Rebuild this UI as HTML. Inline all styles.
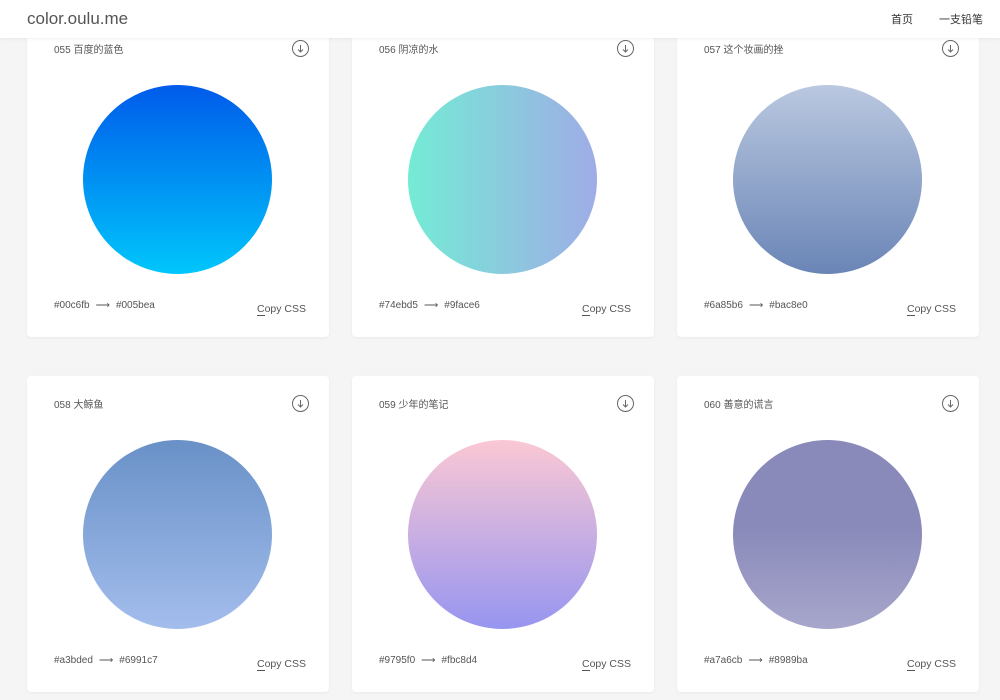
<!DOCTYPE html>
<html><head><meta charset="utf-8"><style>
*{margin:0;padding:0;box-sizing:border-box}
body{width:1000px;height:700px;overflow:hidden;background:#f5f5f5;font-family:"Liberation Sans","Noto Sans CJK SC",sans-serif;position:relative}
.hdr{position:absolute;left:0;top:0;width:1000px;height:38px;background:#fff;box-shadow:0 1px 3px rgba(0,0,0,.06);z-index:5}
.logo{position:absolute;left:27px;top:9px;font-size:17px;color:#555}
.nav{position:absolute;top:11px;font-size:11px;color:#333}
.card{position:absolute;width:302px;height:316px;background:#fff;border-radius:4px;box-shadow:0 1px 3px rgba(0,0,0,.05)}
.t{position:absolute;left:27px;top:20px;font-size:10px;color:#555}
.dl{position:absolute;left:265px;top:19px;width:17px;height:17px;border:1px solid #666;border-radius:50%}
.dl svg{position:absolute;left:3px;top:3px}
.c{position:absolute;left:56px;top:64px;width:189px;height:189px;border-radius:50%}
.h{position:absolute;left:27px;top:279px;font-size:10px;color:#555}
.h span{margin:0 6px}
.cp{position:absolute;right:23px;top:282px;font-size:10.5px;color:#555}
.cp u{text-decoration:none;border-bottom:1px solid #555}
</style></head><body>
<div class="hdr"><div class="logo">color.oulu.me</div><div class="nav" style="left:891px">首页</div><div class="nav" style="left:939px">一支铅笔</div></div>

<div class="card" style="left:27px;top:21px"><div class="t">055 百度的蓝色</div><div class="dl"><svg width="9" height="9" viewBox="0 0 9 9"><path d="M4.5 1v7M2 5.5l2.5 2.5 2.5-2.5" fill="none" stroke="#666"/></svg></div><div class="c" style="background:linear-gradient(#005bea,#00c6fb)"></div><div class="h">#00c6fb<span>⟶</span>#005bea</div><div class="cp"><u>C</u>opy CSS</div></div>
<div class="card" style="left:352px;top:21px"><div class="t">056 阴凉的水</div><div class="dl"><svg width="9" height="9" viewBox="0 0 9 9"><path d="M4.5 1v7M2 5.5l2.5 2.5 2.5-2.5" fill="none" stroke="#666"/></svg></div><div class="c" style="background:linear-gradient(90deg,#74ebd5,#9face6)"></div><div class="h">#74ebd5<span>⟶</span>#9face6</div><div class="cp"><u>C</u>opy CSS</div></div>
<div class="card" style="left:677px;top:21px"><div class="t">057 这个妆画的挫</div><div class="dl"><svg width="9" height="9" viewBox="0 0 9 9"><path d="M4.5 1v7M2 5.5l2.5 2.5 2.5-2.5" fill="none" stroke="#666"/></svg></div><div class="c" style="background:linear-gradient(#bac8e0,#6a85b6)"></div><div class="h">#6a85b6<span>⟶</span>#bac8e0</div><div class="cp"><u>C</u>opy CSS</div></div>

<div class="card" style="left:27px;top:376px"><div class="t">058 大鲸鱼</div><div class="dl"><svg width="9" height="9" viewBox="0 0 9 9"><path d="M4.5 1v7M2 5.5l2.5 2.5 2.5-2.5" fill="none" stroke="#666"/></svg></div><div class="c" style="background:linear-gradient(#6991c7,#a3bded)"></div><div class="h">#a3bded<span>⟶</span>#6991c7</div><div class="cp"><u>C</u>opy CSS</div></div>
<div class="card" style="left:352px;top:376px"><div class="t">059 少年的笔记</div><div class="dl"><svg width="9" height="9" viewBox="0 0 9 9"><path d="M4.5 1v7M2 5.5l2.5 2.5 2.5-2.5" fill="none" stroke="#666"/></svg></div><div class="c" style="background:linear-gradient(#fbc8d4,#9795f0)"></div><div class="h">#9795f0<span>⟶</span>#fbc8d4</div><div class="cp"><u>C</u>opy CSS</div></div>
<div class="card" style="left:677px;top:376px"><div class="t">060 善意的谎言</div><div class="dl"><svg width="9" height="9" viewBox="0 0 9 9"><path d="M4.5 1v7M2 5.5l2.5 2.5 2.5-2.5" fill="none" stroke="#666"/></svg></div><div class="c" style="background:linear-gradient(0deg,#a7a6cb 0%,#8989ba 55%,#8989ba 100%)"></div><div class="h">#a7a6cb<span>⟶</span>#8989ba</div><div class="cp"><u>C</u>opy CSS</div></div>
</body></html>
